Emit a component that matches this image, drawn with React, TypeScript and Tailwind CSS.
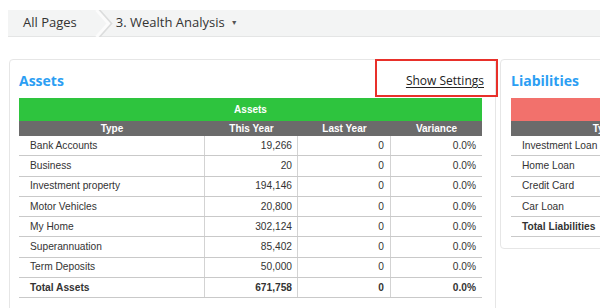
import React from "react";

const assets = [
  ["Bank Accounts", "19,266", "0", "0.0%"],
  ["Business", "20", "0", "0.0%"],
  ["Investment property", "194,146", "0", "0.0%"],
  ["Motor Vehicles", "20,800", "0", "0.0%"],
  ["My Home", "302,124", "0", "0.0%"],
  ["Superannuation", "85,402", "0", "0.0%"],
  ["Term Deposits", "50,000", "0", "0.0%"],
];

const liabilities = ["Investment Loan", "Home Loan", "Credit Card", "Car Loan"];

function Row({ cells, bold }: { cells: string[]; bold?: boolean }) {
  return (
    <div
      className={`grid grid-cols-[186px_93px_93px_91px] h-[20.25px] border-b border-[#c9c9c9] text-[10.2px] text-[#333] ${
        bold ? "font-bold" : ""
      }`}
    >
      <div className="pl-[11px] flex items-center border-r border-[#d3d3d3] whitespace-nowrap">{cells[0]}</div>
      <div className="pr-[5px] flex items-center justify-end border-r border-[#d3d3d3]">{cells[1]}</div>
      <div className="pr-[6px] flex items-center justify-end border-r border-[#d3d3d3]">{cells[2]}</div>
      <div className="pr-[6px] flex items-center justify-end">{cells[3]}</div>
    </div>
  );
}

function Table({
  title,
  color,
  rows,
  total,
}: {
  title: string;
  color: string;
  rows: string[][];
  total: string[];
}) {
  return (
    <div className="w-[463px] shrink-0 font-['Liberation_Sans',Arial,sans-serif]">
      <div
        className={`h-[23px] ${color} flex items-center justify-center text-white text-[10px] font-bold`}
      >
        {title}
      </div>
      <div className="grid grid-cols-[186px_93px_93px_91px] h-[15px] bg-[#6b6b6b] text-white text-[10px] font-bold leading-[15px] text-center">
        <div>Type</div>
        <div>This Year</div>
        <div>Last Year</div>
        <div>Variance</div>
      </div>
      {rows.map((r) => (
        <Row key={r[0]} cells={r} />
      ))}
      <Row cells={total} bold />
    </div>
  );
}

export default function App() {
  return (
    <div className="relative w-[600px] h-[308px] overflow-hidden bg-white font-['Open_Sans',sans-serif]">
      {/* Breadcrumb */}
      <div className="ml-[8px] mt-[10px] h-[27px] bg-[#f3f4f4] border-b border-[#e4e5e5] flex items-center text-[13px] text-[#333]">
        <span className="pl-[15px]">All Pages</span>
        <svg width="18" height="27" viewBox="0 0 18 27" className="ml-[18px] shrink-0">
          <polyline points="3,0 15,13.5 3,27" fill="none" stroke="#dcdddd" strokeWidth="4" />
          <polyline points="1.5,0 13.5,13.5 1.5,27" fill="none" stroke="#fbfbfb" strokeWidth="3" />
        </svg>
        <span className="ml-[3px]">3. Wealth Analysis</span>
        <span className="ml-[6px] text-[7px] text-[#555]">▼</span>
      </div>

      {/* Cards */}
      <div className="flex gap-[4px] mt-[22px] ml-[9px]">
        <div className="w-[487px] h-[270px] shrink-0 border border-[#e6e6e6] rounded-[4px] pl-[9px]">
          <div className="h-[38px] w-[465px] flex items-start justify-between">
            <div className="mt-[11px] text-[14px] font-bold text-[#2b9ef3] leading-[20px]">Assets</div>
            <div className="mt-[12px] text-[12px] text-[#222] underline underline-offset-2 leading-[18px]">
              Show Settings
            </div>
          </div>
          <Table
            title="Assets"
            color="bg-[#2ec43e]"
            rows={assets}
            total={["Total Assets", "671,758", "0", "0.0%"]}
          />
        </div>
        <div className="w-[200px] h-[190px] shrink-0 border border-[#e6e6e6] rounded-[4px] pl-[10px] overflow-hidden">
          <div className="h-[38px] flex items-start">
            <div className="mt-[11px] text-[14px] font-bold text-[#2b9ef3] leading-[20px]">Liabilities</div>
          </div>
          <Table
            title="Liabilities"
            color="bg-[#f2716c]"
            rows={liabilities.map((l) => [l, "0", "0", "0.0%"])}
            total={["Total Liabilities", "0", "0", "0.0%"]}
          />
        </div>
      </div>

      {/* Annotation box */}
      <div className="absolute left-[375px] top-[59px] w-[123px] h-[38px] border-2 border-[#e8302a]" />
    </div>
  );
}
